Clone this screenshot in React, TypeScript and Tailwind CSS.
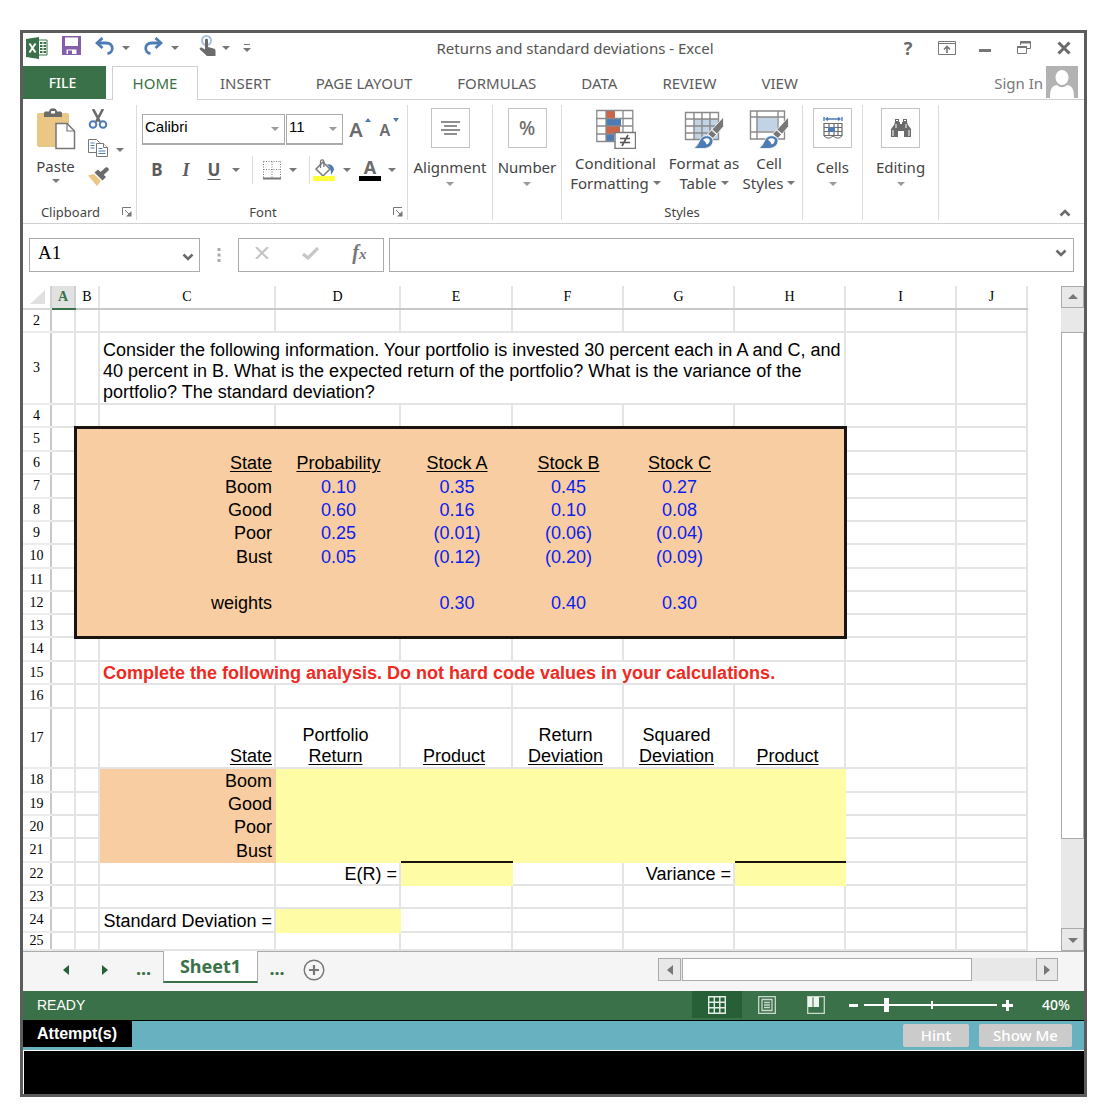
/**
 * Spreadsheet assignment window
 * Excel style ribbon, worksheet grid and the attempt footer
 */

import React, { useState } from 'react';
import clsx from 'clsx';

const tabs = ['INSERT', 'PAGE LAYOUT', 'FORMULAS', 'DATA', 'REVIEW', 'VIEW'];

const columns = [
  { id: 'A', width: 'w-[24px]' },
  { id: 'B', width: 'w-[24px]' },
  { id: 'C', width: 'w-[176px]' },
  { id: 'D', width: 'w-[125px]' },
  { id: 'E', width: 'w-[112px]' },
  { id: 'F', width: 'w-[111px]' },
  { id: 'G', width: 'w-[111px]' },
  { id: 'H', width: 'w-[111px]' },
  { id: 'I', width: 'w-[111px]' },
  { id: 'J', width: 'w-[71px]' },
];

type CellText = string | string[];

interface Row {
  n: number;
  height: string;
  cells?: Record<string, CellText>;
}

const SHORT = 'h-[23px]';
const TALL = 'h-[24px]';

const rows: Row[] = [
  { n: 2, height: SHORT },
  { n: 3, height: 'h-[72px]' },
  { n: 4, height: SHORT },
  { n: 5, height: TALL },
  { n: 6, height: SHORT, cells: { C: 'State', D: 'Probability', E: 'Stock A', F: 'Stock B', G: 'Stock C' } },
  { n: 7, height: TALL, cells: { C: 'Boom', D: '0.10', E: '0.35', F: '0.45', G: '0.27' } },
  { n: 8, height: SHORT, cells: { C: 'Good', D: '0.60', E: '0.16', F: '0.10', G: '0.08' } },
  { n: 9, height: SHORT, cells: { C: 'Poor', D: '0.25', E: '(0.01)', F: '(0.06)', G: '(0.04)' } },
  { n: 10, height: TALL, cells: { C: 'Bust', D: '0.05', E: '(0.12)', F: '(0.20)', G: '(0.09)' } },
  { n: 11, height: SHORT },
  { n: 12, height: SHORT, cells: { C: 'weights', E: '0.30', F: '0.40', G: '0.30' } },
  { n: 13, height: SHORT },
  { n: 14, height: TALL },
  { n: 15, height: SHORT },
  { n: 16, height: TALL },
  {
    n: 17,
    height: 'h-[60px]',
    cells: {
      C: 'State',
      D: ['Portfolio', 'Return'],
      E: 'Product',
      F: ['Return', 'Deviation'],
      G: ['Squared', 'Deviation'],
      H: 'Product',
    },
  },
  { n: 18, height: TALL, cells: { C: 'Boom' } },
  { n: 19, height: SHORT, cells: { C: 'Good' } },
  { n: 20, height: SHORT, cells: { C: 'Poor' } },
  { n: 21, height: TALL, cells: { C: 'Bust' } },
  { n: 22, height: SHORT, cells: { D: 'E(R) =', G: 'Variance =' } },
  { n: 23, height: SHORT },
  { n: 24, height: TALL, cells: { C: 'Standard Deviation =' } },
  { n: 25, height: 'h-[18px]' },
];

const inBox = (n: number, col: string) => n >= 5 && n <= 13 && col >= 'B' && col <= 'H';

const isAnswer = (n: number, col: string) =>
  (n >= 18 && n <= 21 && col >= 'D' && col <= 'H') ||
  (n === 22 && (col === 'E' || col === 'H')) ||
  (n === 24 && col === 'D');

const isStateFill = (n: number, col: string) => n >= 18 && n <= 21 && col === 'C';

const fillClass = (n: number, col: string) => {
  if (inBox(n, col) || isStateFill(n, col)) return 'bg-[#f8cda1]';
  if (isAnswer(n, col)) return 'bg-[#fffca6]';
  return '';
};

const rightClass = (n: number, col: string) => {
  if (n >= 5 && n <= 13 && (col === 'A' || col === 'H')) return 'border-r-3 border-r-[#1a1410]';
  if (inBox(n, col) || isStateFill(n, col)) return 'border-r-2 border-r-[#f8cda1]';
  if (isAnswer(n, col)) return 'border-r-2 border-r-[#fffca6]';
  return 'border-r-2 border-r-[#e4e4e4]';
};

const bottomClass = (n: number, col: string) => {
  if ((n === 4 || n === 13) && col >= 'B' && col <= 'H') return 'border-b-3 border-b-[#1a1410]';
  if (n === 21 && (col === 'E' || col === 'H')) return 'border-b-2 border-b-[#1a1410]';
  if (inBox(n, col) || isStateFill(n, col)) return 'border-b-2 border-b-[#f8cda1]';
  if (isAnswer(n, col)) return 'border-b-2 border-b-[#fffca6]';
  return 'border-b-2 border-b-[#e4e4e4]';
};

const Caret = ({ light = false }: { light?: boolean }) => (
  <svg viewBox="0 0 8 4" className={clsx('h-1 w-2 shrink-0', light ? 'text-[#9a9a9a]' : 'text-[#777777]')} fill="currentColor">
    <path d="M0 0h8L4 4z" />
  </svg>
);

const CaretButton = ({ label, className }: { label: string; className: string }) => (
  <button aria-label={label} className={clsx('flex h-6 items-center justify-center', className)}>
    <Caret />
  </button>
);

const Launcher = () => (
  <svg viewBox="0 0 10 10" className="size-[10px]" fill="none" stroke="#777777" strokeWidth="1">
    <path d="M.5 8V.5H9" />
    <path d="M3 3l4 4" />
    <path d="M9.500 4v5.500H4z" fill="#777777" stroke="none" />
  </svg>
);

const Chevron = ({ up = false }: { up?: boolean }) => (
  <svg viewBox="0 0 12 8" className="h-2 w-3" fill="none" stroke="#6a6a6a" strokeWidth="2.600">
    <path d={up ? 'M1.500 6.500L6 2l4.500 4.500' : 'M1.500 1.500L6 6l4.500-4.500'} />
  </svg>
);

const QuickAccess = () => (
  <div className="flex w-[237px] items-center">
    <svg viewBox="0 0 22 22" className="ml-[3px] size-[22px]">
      <path d="M11 3h10v15H11z" fill="#fff" stroke="#3b7148" />
      <path d="M14 5h2.500v2H14zM17.500 5H20v2h-2.500zM14 8h2.500v2H14zM17.500 8H20v2h-2.500zM14 11h2.500v2H14zM17.500 11H20v2h-2.500zM14 14h2.500v2H14zM17.500 14H20v2h-2.500z" fill="#3b7148" />
      <path d="M0 2l13-2v22L0 20z" fill="#3b7148" />
      <path d="M3.500 6.500l6 9M9.500 6.500l-6 9" stroke="#fff" strokeWidth="2" />
    </svg>
    <button aria-label="Save" className="ml-[14px] pb-1">
      <svg viewBox="0 0 19 19" className="size-[19px]">
        <path d="M0 0h19v19H0z" fill="#8560a8" />
        <path d="M3 1.500h13v8.500H3z" fill="#fff" />
        <path d="M4.500 13.500h10V18h-10z" fill="#fff" />
        <path d="M6 14.500h4V19H6z" fill="#8560a8" />
      </svg>
    </button>
    <button aria-label="Undo" className="ml-[14px] pb-1">
      <svg viewBox="0 0 19 18" className="h-[18px] w-[19px]" fill="none" stroke="#4d7cb5" strokeWidth="2.800">
        <path d="M2 6h9.500c7.500 0 7.500 10 1 10.500" />
        <path d="M7.500 1L2 6l5.500 5" />
      </svg>
    </button>
    <CaretButton label="Undo history" className="ml-1 w-[16px]" />
    <button aria-label="Redo" className="ml-[10px] pb-1">
      <svg viewBox="0 0 19 18" className="h-[18px] w-[19px]" fill="none" stroke="#4d7cb5" strokeWidth="2.800">
        <path d="M17 6H7.500C0 6 0 16 6.500 16.500" />
        <path d="M11.500 1L17 6l-5.500 5" />
      </svg>
    </button>
    <CaretButton label="Redo history" className="ml-1 w-[16px]" />
    <button aria-label="Touch mode" className="ml-[16px] pb-1">
      <svg viewBox="0 0 18 22" className="h-[22px] w-[18px]">
        <circle cx="7.500" cy="5.500" r="4.500" fill="none" stroke="#a9c0dc" strokeWidth="2" />
        <path d="M6 5a1.500 1.500 0 013 0v7l5.500 1.500c2 .6 2 1.500 2 3V21H8l-7-6.500c-1-1.500.6-2.600 2-1.700L6 14.500z" fill="#6b6b6b" />
      </svg>
    </button>
    <CaretButton label="Touch options" className="w-[18px]" />
    <button aria-label="Customize toolbar" className="ml-[8px]">
      <svg viewBox="0 0 8 8" className="size-2" fill="#777777">
        <path d="M1 0h6v1H1zM0 4h8L4 8z" />
      </svg>
    </button>
  </div>
);

const WindowControls = () => (
  <div className="flex w-[194px] items-center text-[#6b6b6b]">
    <button aria-label="Help" className="ml-[9px] w-[18px] text-[18px] leading-5 font-bold">?</button>
    <button aria-label="Ribbon display options" className="ml-[21px]">
      <svg viewBox="0 0 18 14" className="h-[14px] w-[18px]" fill="none" stroke="#777777">
        <path d="M.5.500h17v13H.5zM.5 2.500h17" />
        <path d="M9 12V6M6 8.500l3-3 3 3" strokeWidth="1.600" />
      </svg>
    </button>
    <button aria-label="Minimize" className="ml-[23px]">
      <svg viewBox="0 0 12 14" className="h-[14px] w-3"><path d="M0 8h12v3H0z" fill="#777777" /></svg>
    </button>
    <button aria-label="Restore" className="ml-[26px]">
      <svg viewBox="0 0 14 14" className="size-[14px]" fill="none" stroke="#777777">
        <path d="M3.500 4V.5h10v7H10" />
        <path d="M3 1.500h11" strokeWidth="2" />
        <path d="M.5 5.500h9v7h-9z" />
        <path d="M0 6h10" strokeWidth="2" />
      </svg>
    </button>
    <button aria-label="Close" className="ml-[26px]">
      <svg viewBox="0 0 14 14" className="size-[14px]" stroke="#6b6b6b" strokeWidth="3"><path d="M1.500 1.500l11 11M12.500 1.500l-11 11" /></svg>
    </button>
  </div>
);

const RibbonGroup = ({ width, label, launcher, children }: { width: string; label?: string; launcher?: boolean; children: React.ReactNode }) => (
  <div className={clsx('flex flex-col border-r border-[#dcdcdc]', width)}>
    <div className="flex h-[99px]">{children}</div>
    <div className={clsx('relative flex h-4 items-center justify-center', launcher && 'pr-[18px]')}>
      {label && <span className="text-[13px] leading-4">{label}</span>}
      {launcher && (
        <button aria-label={`${label} settings`} className="absolute right-1"><Launcher /></button>
      )}
    </div>
  </div>
);

const BoxedButton = ({ label, children }: { label: string; children: React.ReactNode }) => (
  <button className="flex flex-1 flex-col items-center pt-[3px]">
    <span className="flex h-[40px] w-[39px] items-center justify-center border border-[#c3c3c3]">{children}</span>
    <span className="mt-[9px] text-[15px] leading-5">{label}</span>
    <span className="mt-[5px]"><Caret light /></span>
  </button>
);

const StyleButton = ({ width, lines, children }: { width: string; lines: string[]; children: React.ReactNode }) => (
  <button className={clsx('flex flex-col items-center pt-[4px] text-[15px] leading-5 whitespace-nowrap', width)}>
    {children}
    <span className="mt-1">{lines[0]}</span>
    <span className="flex items-center gap-1">{lines[1]}<Caret /></span>
  </button>
);

const Brush = () => (
  <>
    <path d="M39.500 8v9.500L33 25l-5-4.500z" fill="#777777" stroke="#fff" strokeWidth=".8" />
    <path d="M27.500 21l5 4.500-3.500 4-5.500-4.500z" fill="#777777" stroke="#fff" strokeWidth="1" />
    <path d="M8 39.500c5-1 6-5 8.500-9.500 3-5 11-4 12.500 1 .5 6-5 8.500-10 8.500z" fill="#4d7cb5" stroke="#fff" strokeWidth=".8" />
    <path d="M19 31c2-3 8-2 6.500 1.500-.5 1.500-1.500 2.500-3 3-.5-2-1.500-3.500-3.500-4.500z" fill="#fff" />
  </>
);

const Ribbon = () => (
  <div className="flex border-b border-[#d0d0d0] pt-[5px] pb-[3px] text-[#444444]">
    <RibbonGroup width="w-[114px]" label="Clipboard" launcher>
      <button className="ml-[8px] flex w-[49px] flex-col items-center pt-[2px]">
        <svg viewBox="0 0 40 43" className="h-[43px] w-10">
          <rect x="1" y="6" width="32" height="34" rx="2" fill="#eac784" />
          <path d="M8 10V6.500C8 5 9 4.500 10 4.500h3c0-4.500 8-4.500 8 0h3c1 0 2 .5 2 2V10z" fill="#6b6b6b" />
          <path d="M15 4h4v2.500h-4z" fill="#fff" />
          <path d="M20 16.500h11l7.500 7.500v17.500H20z" fill="#fff" stroke="#777777" strokeWidth="1.500" />
          <path d="M31 16.500V24h7.500" fill="none" stroke="#777777" strokeWidth="1.200" />
        </svg>
        <span className="mt-[6px] text-[15px] leading-5">Paste</span>
        <span className="mt-[3px]"><Caret /></span>
      </button>
      <div className="ml-[6px] flex w-[24px] flex-col items-center gap-[10px] pt-[4px]">
        <button aria-label="Cut">
          <svg viewBox="0 0 20 20" className="size-5" fill="none">
            <path d="M5 0l7 13M15 0L8 13" stroke="#6b6b6b" strokeWidth="2.600" />
            <circle cx="5" cy="15.500" r="3.300" stroke="#4d7cb5" strokeWidth="2" />
            <circle cx="15" cy="15.500" r="3.300" stroke="#4d7cb5" strokeWidth="2" />
          </svg>
        </button>
        <button aria-label="Copy">
          <svg viewBox="0 0 20 18" className="h-[18px] w-5" fill="#fff" stroke="#777777">
            <path d="M.5.500h8l3 3v10H.5z" />
            <path d="M2.500 4h4M2.500 6.500h4M2.500 9h4" stroke="#4d7cb5" />
            <path d="M8.500 4.500h7l4 4v9h-11z" />
            <path d="M15.500 4.500v4h4" />
            <path d="M10.500 9.500h4M10.500 12h7M10.500 14.500h7" stroke="#4d7cb5" />
          </svg>
        </button>
        <button aria-label="Format painter">
          <svg viewBox="0 0 22 19" className="h-[19px] w-[22px]">
            <path d="M1 8.500l6-1.500 7 7-4 5z" fill="#eac784" />
            <path d="M7.500 5.500l3.500-3 8 7.500-3.500 3.500z" fill="#6b6b6b" />
            <path d="M13 5.500L18.500.5c2-1 4 1 3 3L16 8.500z" fill="#6b6b6b" />
          </svg>
        </button>
      </div>
      <CaretButton label="Copy options" className="mt-[33px] w-5" />
    </RibbonGroup>

    <RibbonGroup width="w-[271px]" label="Font" launcher>
      <div className="flex flex-col pl-[5px]">
        <div className="flex items-center pt-[9px]">
          <div className="relative">
            <select aria-label="Font name" className="h-[31px] w-[143px] appearance-none rounded-none border border-b-2 border-[#ababab] bg-white pb-1 pl-[2px] font-['Liberation_Sans',sans-serif] text-[15px] leading-5 text-black">
              <option>Calibri</option>
            </select>
            <span className="pointer-events-none absolute top-[13px] right-[6px]"><Caret light /></span>
          </div>
          <div className="relative ml-px">
            <select aria-label="Font size" className="h-[31px] w-[57px] appearance-none rounded-none border border-b-2 border-[#ababab] bg-white pb-1 pl-[2px] font-['Liberation_Sans',sans-serif] text-[15px] leading-5 text-black">
              <option>11</option>
            </select>
            <span className="pointer-events-none absolute top-[13px] right-[6px]"><Caret light /></span>
          </div>
          <button aria-label="Increase font size" className="relative ml-[4px] w-[26px] pr-2 text-[20px] leading-6 font-semibold text-[#6b6b6b]">
            A
            <svg viewBox="0 0 6 4" className="absolute top-0 right-[2px] h-1 w-[6px]" fill="#4d7cb5"><path d="M0 4l3-4 3 4z" /></svg>
          </button>
          <button aria-label="Decrease font size" className="relative ml-[4px] w-[24px] pr-2 text-[16px] leading-6 font-semibold text-[#6b6b6b]">
            A
            <svg viewBox="0 0 6 4" className="absolute top-0 right-[2px] h-1 w-[6px]" fill="#4d7cb5"><path d="M0 0h6L3 4z" /></svg>
          </button>
        </div>
        <div className="mt-[11px] flex items-center text-[17px] leading-7 font-bold text-[#5c5c5c]">
          <button className="w-[30px]">B</button>
          <button className="w-[28px] font-['Liberation_Serif',serif] text-[18px] italic">I</button>
          <button className="w-[28px] underline underline-offset-3">U</button>
          <CaretButton label="Underline options" className="w-4" />
          <span className="mx-2 h-7 w-px bg-[#dcdcdc]" />
          <button aria-label="Borders" className="flex w-[22px] justify-center">
            <svg viewBox="0 0 18 19" className="h-[19px] w-[18px]" fill="none" stroke="#777777">
              <path d="M.5.500h17M.5 8.500h17M.5.500v16M9 .5v16M17.500.5v16" strokeDasharray="1 1.500" />
              <path d="M0 17.500h18" strokeWidth="2" />
            </svg>
          </button>
          <CaretButton label="Border options" className="w-5" />
          <span className="ml-[6px] h-7 w-px bg-[#dcdcdc]" />
          <button aria-label="Fill color" className="flex w-[28px] justify-center">
            <svg viewBox="0 0 22 22" className="size-[22px]">
              <path d="M3 10l7-7 7 7-7 7z" fill="#fff" stroke="#777777" strokeWidth="1.500" />
              <path d="M7.500 9V2.500a1.700 1.700 0 013.400 0V8" fill="none" stroke="#777777" strokeWidth="1.300" />
              <path d="M14 5c5 0 7 3 7 6l-3 5c0-5-1-8-4-11z" fill="#4d7cb5" />
              <path d="M0 17h22v5H0z" fill="#ffff3c" />
            </svg>
          </button>
          <CaretButton label="Fill color options" className="w-[18px]" />
          <button aria-label="Font color" className="flex w-[28px] flex-col items-center text-[18px] leading-[17px] text-[#6b6b6b]">
            A
            <span className="h-[5px] w-[22px] bg-black" />
          </button>
          <CaretButton label="Font color options" className="w-4" />
        </div>
      </div>
    </RibbonGroup>

    <RibbonGroup width="w-[85px]">
      <BoxedButton label="Alignment">
        <svg viewBox="0 0 19 14" className="h-[14px] w-[19px]" stroke="#6b6b6b" strokeWidth="1.400">
          <path d="M0 1h19M3 5h13M0 9h19M3 13h13" />
        </svg>
      </BoxedButton>
    </RibbonGroup>

    <RibbonGroup width="w-[69px]">
      <BoxedButton label="Number">
        <span className="text-[19px] leading-5 font-medium text-[#6b6b6b]">%</span>
      </BoxedButton>
    </RibbonGroup>

    <RibbonGroup width="w-[241px]" label="Styles">
      <StyleButton width="w-[107px]" lines={['Conditional', 'Formatting']}>
        <svg viewBox="0 0 40 40" className="size-10">
          <path d="M.8 1.500h36v31H.8z" fill="#fff" />
          <path d="M10 2h9v7h-9zM10 17h14v8H10z" fill="#cd6347" />
          <path d="M10 10h15v7H10zM10 25h8v8h-8z" fill="#4d7cb5" />
          <path d="M.8 1.500h36v31H.8zM.8 9.500h36M.8 17h36M.8 25h36M10 1.500v31M27 1.500v31" fill="none" stroke="#8a8a8a" strokeWidth="1.300" />
          <path d="M19 23.500h20.500v16H19z" fill="#fff" stroke="#777777" strokeWidth="1.400" />
          <path d="M24 29.500h10M24 33.500h10M32 26l-6 11" stroke="#555555" strokeWidth="1.600" />
        </svg>
      </StyleButton>
      <StyleButton width="w-[70px]" lines={['Format as', 'Table']}>
        <svg viewBox="0 0 40 40" className="size-10">
          <path d="M1.500 3.500h33v27h-33z" fill="#fff" />
          <path d="M10 10h24v20H10z" fill="#c3d3e6" />
          <path d="M1.500 3.500h33v27h-33zM1.500 10h33M1.500 17h33M1.500 24h33M10 3.500v27M18 3.500v27M26 3.500v27" fill="none" stroke="#8a8a8a" strokeWidth="1.400" />
          <Brush />
        </svg>
      </StyleButton>
      <StyleButton width="w-[60px]" lines={['Cell', 'Styles']}>
        <svg viewBox="0 0 40 40" className="size-10">
          <path d="M1.500 2h34v28h-34z" fill="#fff" />
          <path d="M8 8h20v14H8z" fill="#c3d3e6" />
          <path d="M1.500 2h34v28h-34zM1.500 8h34M1.500 23h34M8 2v28M29 2v28" fill="none" stroke="#8a8a8a" strokeWidth="1.400" />
          <Brush />
        </svg>
      </StyleButton>
    </RibbonGroup>

    <RibbonGroup width="w-[60px]">
      <BoxedButton label="Cells">
        <svg viewBox="0 0 20 22" className="h-[22px] w-5" fill="none" stroke="#6b6b6b">
          <path d="M1 0v4M19 0v4M3 2h14M5 .5L3 2l2 1.500M15 .5L17 2l-2 1.500" stroke="#4d7cb5" strokeWidth="1.400" />
          <path d="M1 6.500h18v12H1zM1 10.500h18M1 14.500h18M6 6.500v12M11 6.500v12M15 6.500v12" strokeWidth="1.200" />
          <path d="M5 10h7v5H5z" fill="#4d7cb5" stroke="none" />
          <path d="M1 19l3 2h3l3-2 3 2h3l3-2" />
        </svg>
      </BoxedButton>
    </RibbonGroup>

    <RibbonGroup width="w-[76px]">
      <BoxedButton label="Editing">
        <svg viewBox="0 0 20 18" className="h-[18px] w-5" fill="#6b6b6b">
          <path d="M4 0h4v3h1v2h2V3h1V0h4v3l1 3 3 4v8h-7v-6H7v6H0v-8l3-4 1-3z" />
          <path d="M5 1.500h2M13 1.500h2M2 11v6M18 11v6M5 5v4M15 5v4" stroke="#fff" />
        </svg>
      </BoxedButton>
    </RibbonGroup>

    <button aria-label="Collapse ribbon" className="mt-auto mr-[13px] mb-[3px] ml-auto"><Chevron up /></button>
  </div>
);

const FormulaBar = () => {
  const [name, setName] = useState('A1');
  const [formula, setFormula] = useState('');

  return (
    <div className="flex items-center pt-[14px] pr-[10px] pb-[14px] pl-[6px]">
      <div className="flex h-[34px] w-[171px] items-center border border-[#ababab] pr-[5px]">
        <input
          aria-label="Name box"
          value={name}
          onChange={(e) => setName(e.target.value)}
          className="w-full min-w-0 pb-1 pl-2 font-['Liberation_Serif',serif] text-[19px] leading-6 text-black outline-none"
        />
        <button aria-label="Named ranges" className="mt-1"><Chevron /></button>
      </div>
      <svg viewBox="0 0 3 14" className="mx-[17px] h-[14px] w-1" fill="#ababab">
        <path d="M0 0h3v3H0zM0 5.500h3v3H0zM0 11h3v3H0z" />
      </svg>
      <div className="flex h-[34px] w-[146px] items-center justify-around border border-[#ababab] pb-1">
        <button aria-label="Cancel">
          <svg viewBox="0 0 14 12" className="h-3 w-[14px]" stroke="#c6c6c6" strokeWidth="2.200"><path d="M1 0l12 12M13 0L1 12" /></svg>
        </button>
        <button aria-label="Enter">
          <svg viewBox="0 0 17 13" className="h-[13px] w-[17px]" fill="none" stroke="#c6c6c6" strokeWidth="3.200"><path d="M1 7l5 4L16 1" /></svg>
        </button>
        <button aria-label="Insert function" className="font-['Liberation_Serif',serif] text-[20px] leading-6 font-bold text-[#777777] italic">
          f<span className="text-[15px]">x</span>
        </button>
      </div>
      <div className="ml-[5px] flex h-[34px] flex-1 items-center border border-[#ababab] pr-[6px] pb-1">
        <input
          aria-label="Formula"
          value={formula}
          onChange={(e) => setFormula(e.target.value)}
          className="w-full min-w-0 px-2 font-['Liberation_Sans',sans-serif] text-[16px] text-black outline-none"
        />
        <button aria-label="Expand formula bar"><Chevron /></button>
      </div>
    </div>
  );
};

const cellAlign = (n: number, col: string) => {
  if (n === 22 || col === 'C') return 'text-right pr-[2px]';
  if (n === 17) return 'text-center pr-1';
  return 'text-center pl-[2px]';
};

const Cell = ({ row, col }: { row: Row; col: string }) => {
  const { n } = row;
  const text = row.cells?.[col];
  const heading = n === 6 || n === 17;
  const lines = Array.isArray(text) ? text : text ? [text] : [];

  return (
    <td
      className={clsx(
        'py-0 pr-0 pl-0 whitespace-nowrap',
        n === 17 ? 'align-bottom leading-[21px]' : 'pt-px align-middle leading-5',
        fillClass(n, col),
        rightClass(n, col),
        bottomClass(n, col),
        cellAlign(n, col),
        n >= 7 && n <= 12 && col >= 'D' ? 'text-[#0a1ef0]' : 'text-black',
      )}
    >
      {isAnswer(n, col) && (
        <input aria-label={`${col}${n}`} className="block h-5 w-full bg-transparent text-center outline-none" />
      )}
      {lines.map((line, i) => (
        <div key={line} className={clsx(heading && i === lines.length - 1 && 'underline underline-offset-2')}>
          {line}
        </div>
      ))}
    </td>
  );
};

const Sheet = () => (
  <table className="table-fixed border-collapse font-['Liberation_Sans',sans-serif] text-[18px] text-black">
    <colgroup>
      <col className="w-[28px]" />
      {columns.map((c) => (
        <col key={c.id} className={c.width} />
      ))}
    </colgroup>
    <thead className="font-['Liberation_Serif',serif] text-[14px] leading-5">
      <tr className="h-[23px]">
        <th className="border-r-2 border-b-2 border-r-[#d0d0d0] border-b-[#d8d8d8] p-0">
          <svg viewBox="0 0 15 14" className="ml-[7px] h-[14px] w-[15px]"><path d="M15 0v14H0z" fill="#e0e0e0" /></svg>
        </th>
        {columns.map((c) => (
          <th
            key={c.id}
            className={clsx(
              'border-r-2 border-b-2 p-0',
              c.id === 'A'
                ? 'border-r-[#d0d0d0] border-b-[#3b7148] bg-[#e1e1e1] font-bold text-[#3b7148]'
                : 'border-r-[#e4e4e4] border-b-[#c8c8c8] font-normal',
            )}
          >
            {c.id}
          </th>
        ))}
      </tr>
    </thead>
    <tbody>
      {rows.map((row) => (
        <tr key={row.n} className={row.height}>
          <th className="border-r-2 border-b-2 border-r-[#c8c8c8] border-b-[#ececec] p-0 font-['Liberation_Serif',serif] text-[14px] leading-4 font-normal">
            {row.n}
          </th>
          {columns.map(({ id }) => {
            if (row.n === 3 && id === 'C') {
              return (
                <td key={id} colSpan={6} className="border-r-2 border-b-2 border-[#e4e4e4] p-0 pt-[7px] pl-[3px] align-bottom leading-[21px] whitespace-nowrap">
                  Consider the following information. Your portfolio is invested 30 percent each in A and C, and
                  <br />
                  40 percent in B. What is the expected return of the portfolio? What is the variance of the
                  <br />
                  portfolio? The standard deviation?
                </td>
              );
            }
            if (row.n === 15 && id === 'C') {
              return (
                <td key={id} colSpan={6} className="border-r-2 border-b-2 border-[#e4e4e4] p-0 pt-px pl-[3px] leading-5 font-bold whitespace-nowrap text-[#ee2a22]">
                  Complete the following analysis. Do not hard code values in your calculations.
                </td>
              );
            }
            if ((row.n === 3 || row.n === 15) && id > 'C' && id <= 'H') return null;
            return <Cell key={id} row={row} col={id} />;
          })}
        </tr>
      ))}
    </tbody>
  </table>
);

const Triangle = ({ d, className }: { d: string; className?: string }) => (
  <svg viewBox="0 0 10 10" className={clsx('size-[10px]', className)} fill="currentColor"><path d={d} /></svg>
);

const SheetTabs = () => (
  <div className="flex h-10 bg-[#f5f5f5] text-[#3b7148]">
    <div className="flex w-[140px] items-center border-t border-[#ababab] pb-1 pl-[23px]">
      <button aria-label="Previous sheet" className="flex w-[39px] justify-center"><Triangle d="M8 0v10L2 5z" className="text-[#276036]" /></button>
      <button aria-label="Next sheet" className="flex w-[39px] justify-center"><Triangle d="M2 0v10l6-5z" className="text-[#276036]" /></button>
      <button className="w-[39px] pb-1 text-[18px] leading-6 font-bold">...</button>
    </div>
    <button className="h-[32px] w-[95px] border-x border-b-2 border-x-[#ababab] border-b-[#3b7148] bg-white text-[18px] leading-6 font-bold">Sheet1</button>
    <div className="flex flex-1 items-center border-t border-[#ababab] pr-[26px] pb-1">
      <button className="w-[38px] pb-1 text-[18px] leading-6 font-bold">...</button>
      <button aria-label="New sheet" className="flex w-[36px] justify-center">
        <svg viewBox="0 0 22 22" className="size-[22px]" fill="none" stroke="#777777">
          <circle cx="11" cy="11" r="9.800" strokeWidth="1.400" />
          <path d="M11 6v10M6 11h10" strokeWidth="2.200" />
        </svg>
      </button>
      <div className="ml-auto flex h-[23px] w-[400px] bg-[#e8e8e8] text-[#777777]">
        <button aria-label="Scroll left" className="flex w-[23px] items-center justify-center border border-[#ababab]"><Triangle d="M8 0v10L2 5z" /></button>
        <div className="ml-px w-[290px] border border-[#ababab] bg-white" />
        <button aria-label="Scroll right" className="ml-auto flex w-[22px] items-center justify-center border border-[#ababab]"><Triangle d="M2 0v10l6-5z" /></button>
      </div>
    </div>
  </div>
);

const StatusBar = () => {
  const [zoom, setZoom] = useState(16);

  return (
    <div className="flex h-[29px] items-center bg-[#3b7148] pb-[2px] text-white">
      <span className="pl-[14px] font-['Liberation_Sans',sans-serif] text-[14px] leading-5">READY</span>
      <div className="ml-auto flex self-start">
        <button aria-label="Normal view" className="flex h-[27px] w-[50px] items-center justify-center bg-[#276036]">
          <svg viewBox="0 0 18 18" className="size-[18px]" fill="none" stroke="#e5ede7" strokeWidth="1.400"><path d="M.7.700h16.600v16.600H.7zM.7 6.300h16.600M.7 11.800h16.600M6.300.7v16.600M11.800.7v16.600" /></svg>
        </button>
        <button aria-label="Page layout view" className="flex h-[27px] w-[50px] items-center justify-center">
          <svg viewBox="0 0 18 18" className="size-[18px]" fill="none" stroke="#c9d9cd" strokeWidth="1.300"><path d="M.7.700h16.600v16.600H.7zM4 3.500h10v11H4zM6 6.500h6M6 9h6M6 11.500h6" /></svg>
        </button>
        <button aria-label="Page break view" className="flex h-[27px] w-[48px] items-center justify-center">
          <svg viewBox="0 0 18 18" className="size-[18px]"><path d="M.7.700h16.600v16.600H.7z" fill="none" stroke="#c9d9cd" strokeWidth="1.300" /><path d="M1 1h4.500v10H1zM6.500 1H12v10H6.500z" fill="#eef4ef" /></svg>
        </button>
      </div>
      <button aria-label="Zoom out" className="ml-[9px]">
        <svg viewBox="0 0 9 12" className="h-3 w-[9px]"><path d="M0 5h9v3H0z" fill="#fff" /></svg>
      </button>
      <div className="relative ml-[6px] flex h-4 w-[133px] items-center">
        <input
          type="range"
          aria-label="Zoom"
          value={zoom}
          onChange={(e) => setZoom(Number(e.target.value))}
          className="h-[2px] w-full appearance-none bg-white [&::-webkit-slider-thumb]:h-[14px] [&::-webkit-slider-thumb]:w-[5px] [&::-webkit-slider-thumb]:appearance-none [&::-webkit-slider-thumb]:bg-white"
        />
        <span className="absolute left-1/2 h-2 w-[2px] bg-white" />
      </div>
      <button aria-label="Zoom in" className="ml-[5px]">
        <svg viewBox="0 0 11 12" className="h-3 w-[11px]"><path d="M0 5h11v3H0zM4 1h3v11H4z" fill="#fff" /></svg>
      </button>
      <span className="w-[71px] pr-[14px] text-right text-[14px] leading-5 font-medium">40%</span>
    </div>
  );
};

const Attempts = () => (
  <>
    <div className="flex h-[30px] items-start border-t border-black bg-[#68b1c1]">
      <span className="h-[26px] w-[109px] bg-black pl-[14px] font-['Liberation_Sans',sans-serif] text-[16px] leading-[26px] font-bold text-white">Attempt(s)</span>
      <div className="mt-[3px] mr-[12px] ml-auto flex gap-[10px] text-[15px] leading-[23px] font-medium text-white">
        <button className="h-[23px] w-[66px] rounded-xs bg-[#cbcbcb]">Hint</button>
        <button className="h-[23px] w-[93px] rounded-xs bg-[#cbcbcb]">Show Me</button>
      </div>
    </div>
    <div className="h-[44px] border-t border-l border-white bg-black" />
  </>
);

export default function App() {
  return (
    <main className="bg-white pt-[30px] pr-[13px] pb-4 pl-5 font-['Noto_Sans',sans-serif]">
      <div className="border-3 border-[#5c5c5c] bg-white">
        <header className="flex h-[33px] items-center pb-1">
          <QuickAccess />
          <h1 className="flex-1 text-center text-[15px] leading-5 text-[#555555]">Returns and standard deviations - Excel</h1>
          <WindowControls />
        </header>

        <nav className="flex h-[34px] text-[15px] leading-5 text-[#5c5c5c]">
          <button className="mb-px w-[83px] bg-[#3b7148] pr-1 text-[14px] font-medium text-white">FILE</button>
          <span className="w-[6px] border-b border-[#d0d0d0]" />
          <button className="w-[86px] border border-b-0 border-[#d0d0d0] pb-[2px] text-[#3b7148]">HOME</button>
          <div className="flex flex-1 border-b border-[#d0d0d0]">
            {tabs.map((tab) => (
              <button key={tab} className="pr-[23px] pl-[22px]">{tab}</button>
            ))}
            <a href="#" className="mr-[6px] ml-auto flex items-center gap-[3px] text-[#777777]">
              Sign In
              <svg viewBox="0 0 32 32" className="size-8 self-start">
                <path d="M0 0h32v32H0z" fill="#b2b2b2" />
                <ellipse cx="16" cy="11.500" rx="6.500" ry="7.500" fill="#fff" />
                <path d="M4 32c0-8 1-12 7-13 3 3 7 3 10 0 6 1 7 5 7 13z" fill="#fff" />
              </svg>
            </a>
          </div>
        </nav>

        <Ribbon />
        <FormulaBar />

        <div className="flex">
          <Sheet />
          <div className="ml-auto flex w-[23px] flex-col bg-[#e8e8e8] text-[#777777]">
            <button aria-label="Scroll up" className="flex h-[22px] items-center justify-center border border-[#ababab]"><Triangle d="M0 7h10L5 2z" /></button>
            <div className="flex-1 pt-6">
              <div className="h-[85%] border border-[#ababab] bg-white" />
            </div>
            <button aria-label="Scroll down" className="flex h-[23px] items-center justify-center border border-[#ababab]"><Triangle d="M0 3h10L5 8z" /></button>
          </div>
        </div>

        <SheetTabs />
        <StatusBar />
        <Attempts />
      </div>
    </main>
  );
}
